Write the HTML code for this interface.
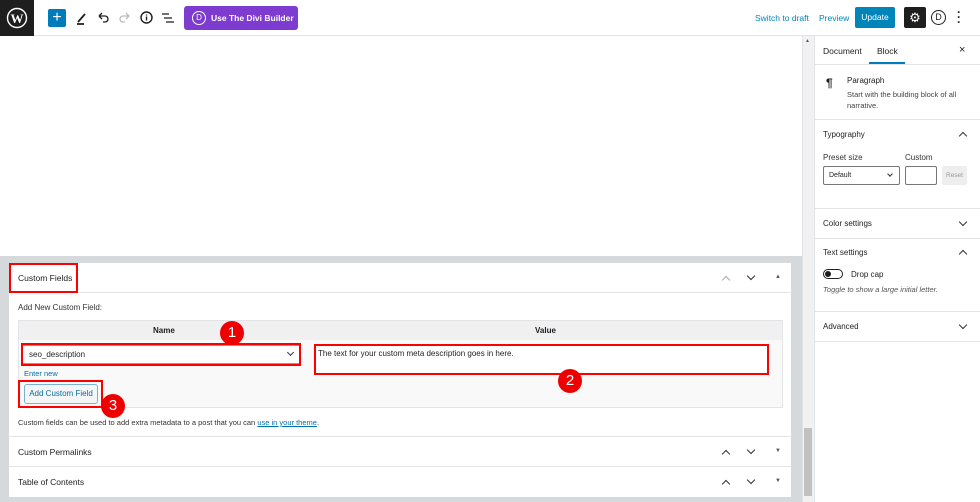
<!DOCTYPE html>
<html><head><meta charset="utf-8"><style>
*{box-sizing:border-box;margin:0;padding:0}
body{width:980px;height:502px;overflow:hidden;background:#fff;font-family:"Liberation Sans",sans-serif;color:#1e1e1e;position:relative;font-size:8px}
.a{position:absolute;white-space:nowrap}
.red{position:absolute;border:2.5px solid #f00}
.circ{position:absolute;width:24px;height:24px;border-radius:50%;background:#e00;color:#fff;font-size:15px;text-align:center;line-height:24px}
.chev{position:absolute;width:6px;height:6px;border-right:1.5px solid #333;border-bottom:1.5px solid #333}
</style></head><body>
<div class="a" style="left:0;top:0;width:980px;height:36px;border-bottom:1px solid #e2e4e7"></div>
<div class="a" style="left:0;top:0;width:34px;height:36px;background:#1e1e1e"></div>
<svg class="a" style="left:6px;top:7px" width="22" height="22" viewBox="0 0 22 22"><circle cx="11" cy="11" r="9.5" fill="none" stroke="#fff" stroke-width="1.4"/><text x="11" y="16" font-size="13" font-weight="bold" fill="#fff" text-anchor="middle" font-family="Liberation Serif">W</text></svg>
<div class="a" style="left:48px;top:9px;width:18px;height:18px;background:#007cba;border-radius:2px;color:#fff;font-size:16px;text-align:center;line-height:17px">+</div>
<svg class="a" style="left:74px;top:10px" width="16" height="16"><path d="M4 12 L11 4 M3 14 H10" stroke="#1e1e1e" stroke-width="1.8"/></svg>
<svg class="a" style="left:96px;top:11px" width="14" height="14"><path d="M3 5 H9 A3 3 0 0 1 9 11 H7 M3 5 L6 2 M3 5 L6 8" fill="none" stroke="#1e1e1e" stroke-width="1.3"/></svg>
<svg class="a" style="left:118px;top:11px" width="14" height="14"><path d="M11 5 H5 A3 3 0 0 0 5 11 H7 M11 5 L8 2 M11 5 L8 8" fill="none" stroke="#bbb" stroke-width="1.3"/></svg>
<svg class="a" style="left:139px;top:10px" width="15" height="15"><circle cx="7.5" cy="7.5" r="5.5" fill="none" stroke="#1e1e1e" stroke-width="1.4"/><path d="M7.5 6.5 V10.5 M7.5 4.5 V5.5" stroke="#1e1e1e" stroke-width="1.4"/></svg>
<svg class="a" style="left:161px;top:11px" width="14" height="14"><path d="M1 3 H8 M3 7 H11 M5 11 H13" stroke="#1e1e1e" stroke-width="1.3"/></svg>
<div class="a" style="left:184px;top:6px;width:114px;height:24px;background:#7e3bd0;border-radius:3px;color:#fff;font-size:8.5px;font-weight:bold;line-height:24px;padding-left:27px">Use The Divi Builder</div>
<div class="a" style="left:192px;top:11px;width:14px;height:14px;border:1.3px solid #fff;border-radius:50%;color:#fff;font-size:8px;text-align:center;line-height:12px">D</div>
<div class="a" style="left:755px;top:13px;font-size:8.5px;color:#0085ba">Switch to draft</div>
<div class="a" style="left:819px;top:13px;font-size:8.5px;color:#0085ba">Preview</div>
<div class="a" style="left:855px;top:7px;width:40px;height:21px;background:#0085ba;border-radius:2px;color:#fff;font-size:8.5px;text-align:center;line-height:21px">Update</div>
<div class="a" style="left:904px;top:7px;width:22px;height:21px;background:#1e1e1e;border-radius:2px;color:#fff;font-size:13px;text-align:center;line-height:21px">⚙</div>
<div class="a" style="left:931px;top:10px;width:15px;height:15px;border:1.5px solid #1e1e1e;border-radius:50%;font-size:9px;text-align:center;line-height:12px">D</div>
<div class="a" style="left:957px;top:10px;font-size:12px;font-weight:bold;line-height:5px;white-space:normal">·<br>·<br>·</div>
<div class="a" style="left:0;top:256px;width:802px;height:246px;background:#d6d9dc"></div>
<div class="a" style="left:802px;top:36px;width:12px;height:466px;background:#f1f1f1;border-left:1px solid #e2e4e7"></div>
<div class="a" style="left:804px;top:428px;width:8px;height:68px;background:#c1c1c1"></div>
<div class="a" style="left:805px;top:38px;font-size:5px;color:#555">▲</div>
<div class="a" style="left:9px;top:263px;width:782px;height:234px;background:#fff"></div>
<div class="a" style="left:9px;top:292px;width:782px;height:1px;background:#e2e4e7"></div>
<div class="a" style="left:18px;top:273px;font-size:8.5px">Custom Fields</div>
<div class="red" style="left:9px;top:263px;width:69px;height:30px"></div>
<div class="chev" style="left:723px;top:277px;transform:rotate(-135deg);border-color:#aaa"></div>
<div class="chev" style="left:748px;top:273px;transform:rotate(45deg)"></div>
<div class="a" style="left:775px;top:274px;font-size:6px;color:#555">▲</div>
<div class="a" style="left:18px;top:303px;font-size:8px;color:#333">Add New Custom Field:</div>
<div class="a" style="left:18px;top:320px;width:765px;height:88px;background:#f9f9f9;border:1px solid #e2e4e7"></div>
<div class="a" style="left:19px;top:321px;width:763px;height:19px;background:#f0f0f1"></div>
<div class="a" style="left:153px;top:326px;font-size:8px;font-weight:bold">Name</div>
<div class="a" style="left:535px;top:326px;font-size:8px;font-weight:bold">Value</div>
<div class="a" style="left:22px;top:345px;width:278px;height:19px;background:#fff;border:1px solid #999"></div>
<div class="a" style="left:29px;top:350px;font-size:8px">seo_description</div>
<div class="chev" style="left:288px;top:350px;transform:rotate(45deg);width:5px;height:5px;border-width:1px"></div>
<div class="red" style="left:21px;top:343px;width:280px;height:23px"></div>
<div class="a" style="left:315px;top:345px;width:452px;height:28px;background:#fff"></div>
<div class="a" style="left:318px;top:349px;font-size:8px">The text for your custom meta description goes in here.</div>
<div class="red" style="left:314px;top:344px;width:455px;height:31px"></div>
<div class="a" style="left:24px;top:369px;font-size:7.5px;color:#0073aa">Enter new</div>
<div class="a" style="left:24px;top:384px;width:74px;height:20px;border:1px solid #7ab3cf;background:#f3f5f6;border-radius:3px;color:#0071a1;font-size:8px;text-align:center;line-height:18px">Add Custom Field</div>
<div class="red" style="left:18px;top:380px;width:85px;height:28px"></div>
<div class="circ" style="left:220px;top:321px">1</div>
<div class="circ" style="left:558px;top:369px">2</div>
<div class="circ" style="left:101px;top:394px">3</div>
<div class="a" style="left:18px;top:418px;font-size:7.5px;color:#333">Custom fields can be used to add extra metadata to a post that you can <span style="color:#0073aa;text-decoration:underline">use in your theme</span>.</div>
<div class="a" style="left:9px;top:436px;width:782px;height:1px;background:#e2e4e7"></div>
<div class="a" style="left:18px;top:447px;font-size:8.5px">Custom Permalinks</div>
<div class="a" style="left:9px;top:466px;width:782px;height:1px;background:#e2e4e7"></div>
<div class="a" style="left:18px;top:477px;font-size:8.5px">Table of Contents</div>
<div class="chev" style="left:723px;top:451px;transform:rotate(-135deg)"></div>
<div class="chev" style="left:748px;top:447px;transform:rotate(45deg)"></div>
<div class="a" style="left:775px;top:448px;font-size:6px;color:#555">▼</div>
<div class="chev" style="left:723px;top:481px;transform:rotate(-135deg)"></div>
<div class="chev" style="left:748px;top:477px;transform:rotate(45deg)"></div>
<div class="a" style="left:775px;top:478px;font-size:6px;color:#555">▼</div>
<div class="a" style="left:814px;top:36px;width:166px;height:466px;border-left:1px solid #e2e4e7"></div>
<div class="a" style="left:814px;top:64px;width:166px;height:1px;background:#e2e4e7"></div>
<div class="a" style="left:823px;top:46px;font-size:8.5px">Document</div>
<div class="a" style="left:877px;top:46px;font-size:8.5px">Block</div>
<div class="a" style="left:869px;top:62px;width:36px;height:2px;background:#007cba"></div>
<div class="a" style="left:959px;top:44px;font-size:11px">×</div>
<div class="a" style="left:826px;top:76px;font-size:12px;font-weight:bold">¶</div>
<div class="a" style="left:847px;top:76px;font-size:8px">Paragraph</div>
<div class="a" style="left:847px;top:89px;font-size:7.5px;color:#444;line-height:11px;width:125px;white-space:normal">Start with the building block of all narrative.</div>
<div class="a" style="left:814px;top:119px;width:166px;height:1px;background:#e2e4e7"></div>
<div class="a" style="left:823px;top:130px;font-size:8px">Typography</div>
<div class="chev" style="left:960px;top:133px;transform:rotate(-135deg)"></div>
<div class="a" style="left:823px;top:153px;font-size:8px;color:#333">Preset size</div>
<div class="a" style="left:905px;top:153px;font-size:8px;color:#333">Custom</div>
<div class="a" style="left:823px;top:166px;width:77px;height:19px;border:1px solid #777;border-radius:2px;font-size:7px;padding:5px 5px">Default</div>
<div class="chev" style="left:888px;top:172px;transform:rotate(45deg);width:4px;height:4px;border-width:1px"></div>
<div class="a" style="left:905px;top:166px;width:32px;height:19px;border:1px solid #777;border-radius:2px"></div>
<div class="a" style="left:942px;top:166px;width:25px;height:19px;background:#eee;border-radius:2px;font-size:6.5px;color:#999;text-align:center;line-height:19px">Reset</div>
<div class="a" style="left:814px;top:208px;width:166px;height:1px;background:#e2e4e7"></div>
<div class="a" style="left:823px;top:219px;font-size:8px">Color settings</div>
<div class="chev" style="left:960px;top:219px;transform:rotate(45deg)"></div>
<div class="a" style="left:814px;top:238px;width:166px;height:1px;background:#e2e4e7"></div>
<div class="a" style="left:823px;top:248px;font-size:8px">Text settings</div>
<div class="chev" style="left:960px;top:251px;transform:rotate(-135deg)"></div>
<div class="a" style="left:823px;top:269px;width:20px;height:10px;border:1.3px solid #1e1e1e;border-radius:6px"></div>
<div class="a" style="left:825px;top:271px;width:6px;height:6px;background:#1e1e1e;border-radius:50%"></div>
<div class="a" style="left:851px;top:270px;font-size:8px">Drop cap</div>
<div class="a" style="left:823px;top:285px;font-size:7.5px;font-style:italic;color:#555">Toggle to show a large initial letter.</div>
<div class="a" style="left:814px;top:311px;width:166px;height:1px;background:#e2e4e7"></div>
<div class="a" style="left:823px;top:322px;font-size:8px">Advanced</div>
<div class="chev" style="left:960px;top:322px;transform:rotate(45deg)"></div>
<div class="a" style="left:814px;top:341px;width:166px;height:1px;background:#e2e4e7"></div>
</body></html>
